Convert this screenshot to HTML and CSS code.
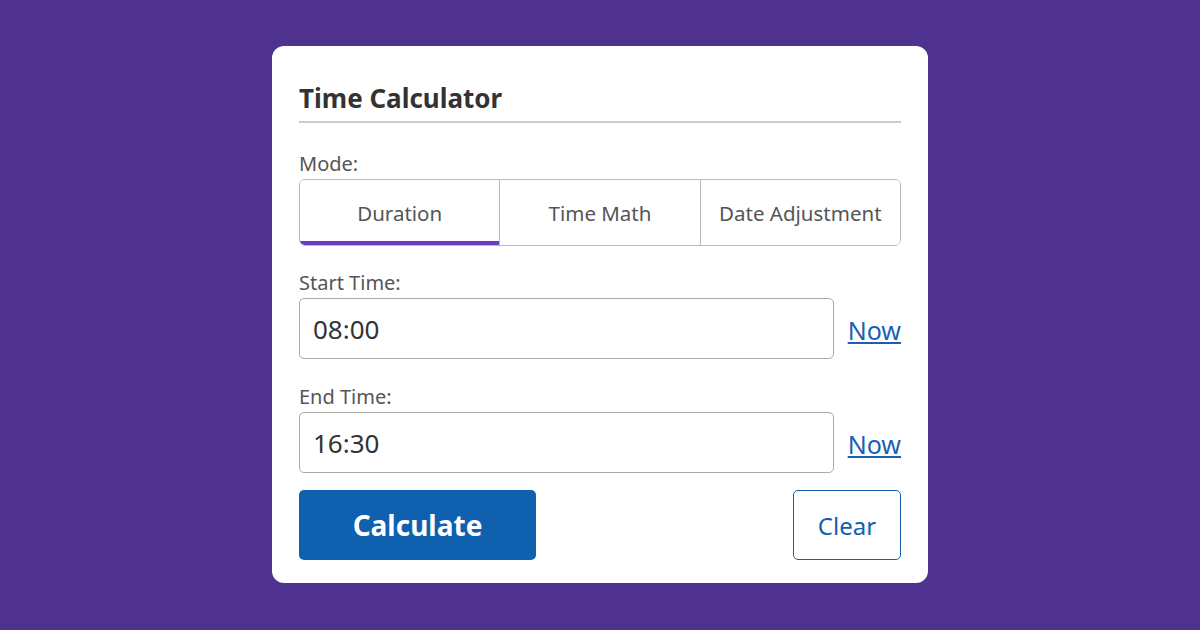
FILE: index.html
```html
<!DOCTYPE html>
<html lang="en">

<head>
    <meta charset="UTF-8">
    <meta name="viewport" content="width=device-width, initial-scale=1.0">
    <title>Time Calculator</title>
    <link rel="stylesheet" href="styles.css">
</head>

<body>
    <div class="card">
        <h1>Time Calculator</h1>

        <div class="field">
            <span class="label">Mode:</span>
            <div class="tabs">
                <button class="tab active">Duration</button>
                <button class="tab">Time Math</button>
                <button class="tab">Date Adjustment</button>
            </div>
        </div>

        <div class="field">
            <label for="startTime" class="label">Start Time:</label>
            <div class="input-row">
                <input type="text" id="startTime" value="08:00">
                <a href="#" class="now">Now</a>
            </div>
        </div>

        <div class="field">
            <label for="endTime" class="label">End Time:</label>
            <div class="input-row">
                <input type="text" id="endTime" value="16:30">
                <a href="#" class="now">Now</a>
            </div>
        </div>

        <div class="actions">
            <button class="btn-primary">Calculate</button>
            <button class="btn-secondary">Clear</button>
        </div>
    </div>
</body>

</html>
```

FILE: styles.css
```css
body {
    font-family: "Noto Sans", "Open Sans", sans-serif;
    background-color: #4f3190;
    margin: 0;
    width: 1200px;
    height: 630px;
    display: flex;
    justify-content: center;
    padding-top: 46px;
    box-sizing: border-box;
}

.card {
    width: 656px;
    height: 537px;
    box-sizing: border-box;
    background-color: #fff;
    border-radius: 12px;
    padding: 36px 27px 0;
}

h1 {
    font-size: 26px;
    font-weight: bold;
    color: #333;
    margin: 0;
    padding: 0 0 7px;
    border-bottom: 2px solid #ccc;
    line-height: 32px;
}

.field {
    margin-top: 28px;
}

.field + .field {
    margin-top: 24px;
}

.field + .field + .field {
    margin-top: 25px;
}

.label {
    display: block;
    font-size: 20px;
    color: #555;
    line-height: 26px;
    margin-bottom: 2px;
}

.tabs {
    display: flex;
    border: 1px solid #bbb;
    border-radius: 6px;
    overflow: hidden;
}

.tab {
    flex: 1;
    height: 65px;
    background: #fff;
    border: none;
    border-left: 1px solid #bbb;
    font-family: inherit;
    font-size: 20.5px;
    color: #555;
    padding: 0;
}

.tab:first-child {
    border-left: none;
}

.tab.active {
    box-shadow: inset 0 -4px 0 #6a3bbf;
}

.input-row {
    display: flex;
    align-items: center;
    gap: 14px;
}

.input-row input {
    flex: 1;
    min-width: 0;
    height: 61px;
    box-sizing: border-box;
    border: 1px solid #aaa;
    border-radius: 5px;
    padding: 0 13px;
    font-family: inherit;
    font-size: 26px;
    color: #333;
}

.now {
    color: #1a5fb4;
    font-size: 25px;
    padding-top: 2px;
}

.actions {
    display: flex;
    justify-content: space-between;
    margin-top: 17px;
}

.btn-primary {
    width: 237px;
    height: 70px;
    background-color: #1060b0;
    color: #fff;
    border: none;
    border-radius: 5px;
    font-family: inherit;
    font-size: 28px;
    font-weight: bold;
}

.btn-secondary {
    width: 108px;
    height: 70px;
    background-color: #fff;
    color: #1060b0;
    border: 1px solid #1060b0;
    border-radius: 5px;
    font-family: inherit;
    font-size: 24px;
}
```
